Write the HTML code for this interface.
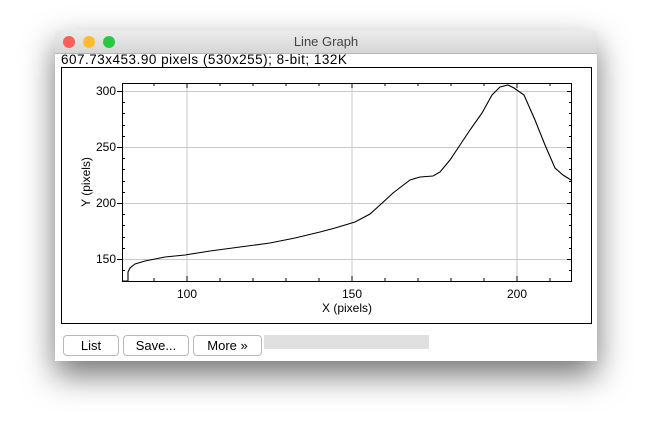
<!DOCTYPE html>
<html><head><style>
body{margin:0;width:652px;height:442px;background:#fff;font-family:"Liberation Sans",sans-serif;position:relative;overflow:hidden}
.win{position:absolute;left:55px;top:30px;width:542px;height:331px;background:#fff;box-shadow:0 14px 32px rgba(0,0,0,0.55);border-radius:5px 5px 0 0}
.tb{position:absolute;left:0;top:0;width:542px;height:23px;background:linear-gradient(#ececec,#d6d6d6);border-bottom:1px solid #b5b5b5;border-radius:5px 5px 0 0;text-align:center;font-size:13px;line-height:23px;color:#444}
.dot{position:absolute;top:6px;width:12px;height:12px;border-radius:50%}
.info{position:absolute;left:6px;top:22px;font-size:13.5px;letter-spacing:0.5px;color:#000}
.btn{position:absolute;top:305px;height:19px;border:1px solid #b8b8b8;border-radius:4px;background:#fff;font-size:13px;text-align:center;line-height:19px}
</style></head><body>
<div class="win">
<div class="tb">Line Graph
<div class="dot" style="left:8px;background:#fc5f57"></div>
<div class="dot" style="left:28px;background:#fdbc2e"></div>
<div class="dot" style="left:48px;background:#28c840"></div></div>
<div class="info">607.73x453.90 pixels (530x255); 8-bit; 132K</div>
<div class="btn" style="left:8px;width:54px">List</div>
<div class="btn" style="left:68px;width:64px">Save...</div>
<div class="btn" style="left:138px;width:67px">More »</div>
<div style="position:absolute;left:209px;top:305px;width:165px;height:14px;background:#e0e0e0"></div>
</div>
<svg width="652" height="442" style="position:absolute;left:0;top:0" font-family="Liberation Sans,sans-serif" font-size="12">
<rect x="61.5" y="67.5" width="530" height="256" fill="#fff" stroke="#000"/>
<g stroke="#c8c8c8">
<line x1="187" y1="83" x2="187" y2="281"/><line x1="352" y1="83" x2="352" y2="281"/><line x1="517" y1="83" x2="517" y2="281"/>
<line x1="122" y1="91.5" x2="572" y2="91.5"/><line x1="122" y1="147.5" x2="572" y2="147.5"/><line x1="122" y1="203.5" x2="572" y2="203.5"/><line x1="122" y1="259.5" x2="572" y2="259.5"/>
</g>
<rect x="122.5" y="83.5" width="449" height="198" fill="none" stroke="#000"/>
<g stroke="#000">
<path d="M187 281v-5M352 281v-5M517 281v-5M187 83v5M352 83v5M517 83v5M154 281v-3M220 281v-3M253 281v-3M286 281v-3M319 281v-3M385 281v-3M418 281v-3M451 281v-3M484 281v-3M550 281v-3M154 83v3M220 83v3M253 83v3M286 83v3M319 83v3M385 83v3M418 83v3M451 83v3M484 83v3M550 83v3"/>
<path d="M122 91.5h-5M122 147.5h-5M122 203.5h-5M122 259.5h-5M572 91.5h-5M572 147.5h-5M572 203.5h-5M572 259.5h-5M122 102.5h3M122 113.5h3M122 125.5h3M122 136.5h3M122 158.5h3M122 169.5h3M122 181.5h3M122 192.5h3M122 214.5h3M122 225.5h3M122 237.5h3M122 248.5h3M122 270.5h3M572 102.5h-3M572 113.5h-3M572 125.5h-3M572 136.5h-3M572 158.5h-3M572 169.5h-3M572 181.5h-3M572 192.5h-3M572 214.5h-3M572 225.5h-3M572 237.5h-3M572 248.5h-3M572 270.5h-3"/>
</g>
<path fill="none" stroke="#000" stroke-width="1.1" d="M122 281H128V272L130 268L135 264L145 261L165 257L185 255L210 251L240 247L270 243L295 238L320 232L335 228L355 222L370 214L380 205L393 193L410 180L420 177L433 176L440 172L450 160L460 145L470 130L482 113L492 95L500 87L508 85L514 88L524 95L535 120L545 145L555 168L563 175L571 180"/>
<g text-anchor="end"><text x="116" y="95">300</text><text x="116" y="151">250</text><text x="116" y="207">200</text><text x="116" y="263">150</text></g>
<g text-anchor="middle"><text x="187" y="298">100</text><text x="352" y="298">150</text><text x="517" y="298">200</text><text x="347" y="312">X (pixels)</text>
<text transform="translate(90,182) rotate(-90)">Y (pixels)</text></g>
</svg>
</body></html>
